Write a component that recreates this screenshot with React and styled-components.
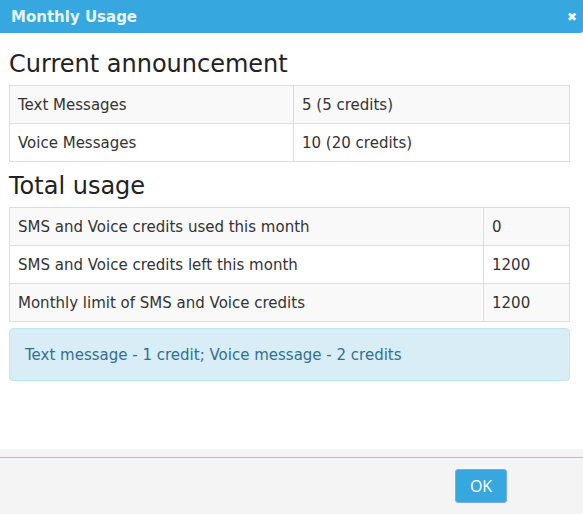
import React from "react";
import styled, { createGlobalStyle } from "styled-components";

const GlobalStyle = createGlobalStyle`
  html, body {
    margin: 0;
    padding: 0;
    background: #ffffff;
  }
  body {
    font-family: "DejaVu Sans", Verdana, sans-serif;
    color: #333;
  }
`;

const Dialog = styled.div`
  width: 583px;
  height: 514px;
  display: flex;
  flex-direction: column;
  background: #fff;
`;

const Header = styled.div`
  height: 33px;
  background: #37a8df;
  display: flex;
  align-items: center;
  justify-content: space-between;
  padding: 0 6px 0 11px;
  box-sizing: border-box;
  border-bottom-right-radius: 3px;
`;

const Title = styled.h1`
  margin: 0;
  font-size: 15px;
  font-weight: bold;
  color: #e6f4fc;
`;

const Close = styled.span`
  color: #fff;
  font-size: 12px;
  font-weight: bold;
  line-height: 1;
  cursor: pointer;
`;

const Body = styled.div`
  flex: 1;
  padding: 0 13px 0 9px;
  display: flex;
  flex-direction: column;
`;

const Heading = styled.h2`
  margin: 0;
  height: ${(p) => p.$h}px;
  display: flex;
  align-items: flex-end;
  padding-bottom: 7px;
  box-sizing: border-box;
  font-size: 24px;
  font-weight: normal;
  color: #222;
`;

const Table = styled.table`
  width: 100%;
  border-collapse: collapse;
  font-size: 15px;
  color: #333;
`;

const Row = styled.tr`
  background: ${(p) => (p.$striped ? "#f9f9f9" : "#fff")};
`;

const Cell = styled.td`
  border: 1px solid #ddd;
  height: 38px;
  padding: 0 8px;
  box-sizing: border-box;
  width: ${(p) => p.$w || "auto"};
`;

const Alert = styled.div`
  margin-top: 6px;
  height: 53px;
  box-sizing: border-box;
  display: flex;
  align-items: center;
  padding: 0 15px;
  background: #d9edf7;
  border: 1px solid #bce8f1;
  border-radius: 4px;
  color: #31708f;
  font-size: 15px;
`;

const Footer = styled.div`
  height: 65px;
  background: #f4f4f4;
  padding-top: 8px;
  box-sizing: border-box;
`;

const FooterBar = styled.div`
  border-top: 1px solid #a7c3d8;
  height: 56px;
  display: flex;
  align-items: center;
  justify-content: flex-end;
  padding-right: 76px;
`;

const Button = styled.button`
  width: 52px;
  height: 34px;
  background: #37a8df;
  border: 1px solid #7aa8f2;
  border-radius: 3px;
  color: #fff;
  font-family: "Open Sans", sans-serif;
  font-size: 16px;
  cursor: pointer;
`;

const announcement = [
  ["Text Messages", "5 (5 credits)"],
  ["Voice Messages", "10 (20 credits)"],
];

const usage = [
  ["SMS and Voice credits used this month", "0"],
  ["SMS and Voice credits left this month", "1200"],
  ["Monthly limit of SMS and Voice credits", "1200"],
];

export default function App() {
  return (
    <>
      <GlobalStyle />
      <Dialog>
        <Header>
          <Title>Monthly Usage</Title>
          <Close>✖</Close>
        </Header>
        <Body>
          <Heading $h={52}>Current announcement</Heading>
          <Table>
            <tbody>
              {announcement.map(([label, value], i) => (
                <Row key={label} $striped={i % 2 === 0}>
                  <Cell $w="284px">{label}</Cell>
                  <Cell>{value}</Cell>
                </Row>
              ))}
            </tbody>
          </Table>
          <Heading $h={45}>Total usage</Heading>
          <Table>
            <tbody>
              {usage.map(([label, value], i) => (
                <Row key={label} $striped={i % 2 === 0}>
                  <Cell>{label}</Cell>
                  <Cell $w="86px">{value}</Cell>
                </Row>
              ))}
            </tbody>
          </Table>
          <Alert>Text message - 1 credit; Voice message - 2 credits</Alert>
        </Body>
        <Footer>
          <FooterBar>
            <Button>OK</Button>
          </FooterBar>
        </Footer>
      </Dialog>
    </>
  );
}
